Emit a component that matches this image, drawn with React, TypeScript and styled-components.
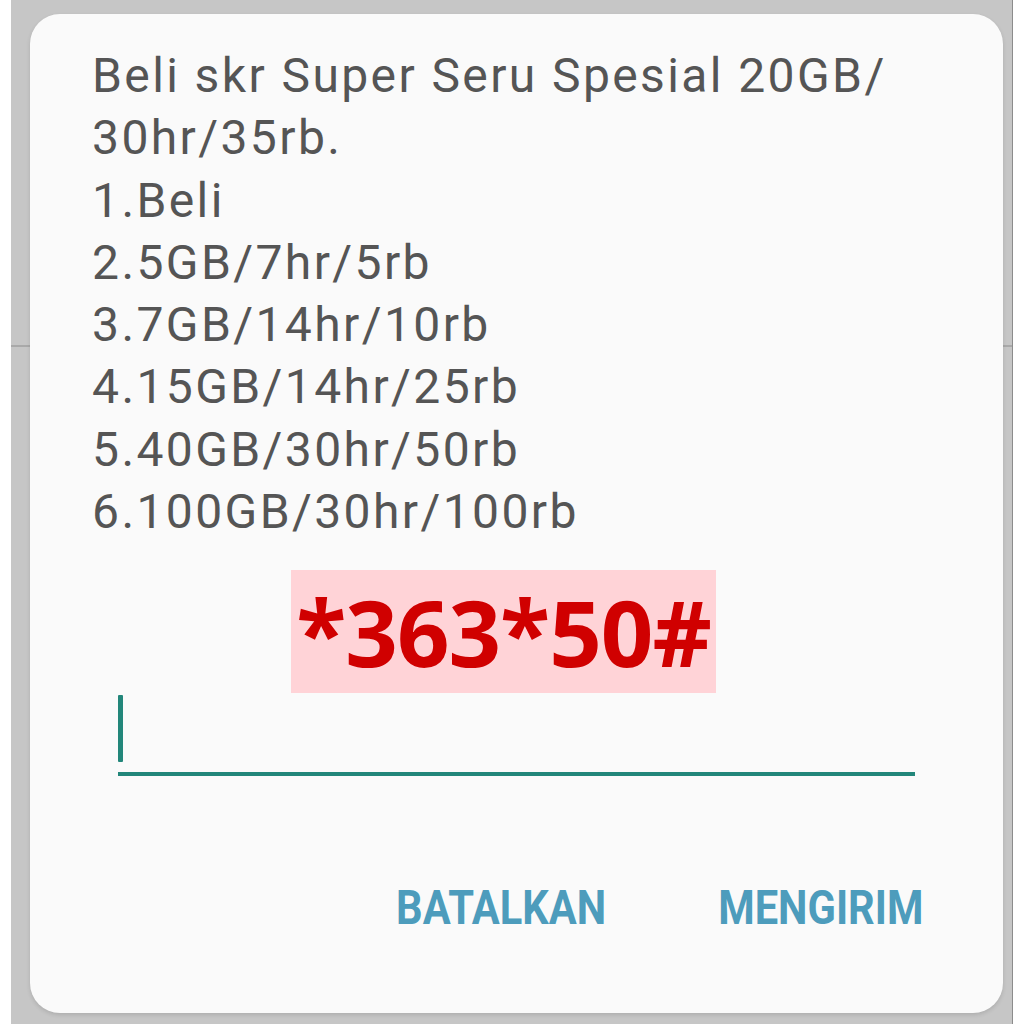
import React from 'react';
import styled, { createGlobalStyle } from 'styled-components';

const GlobalStyle = createGlobalStyle`
  html, body {
    margin: 0;
    padding: 0;
    background: #ffffff;
  }
  * {
    box-sizing: border-box;
  }
`;

const Page = styled.div`
  width: 1024px;
  height: 1024px;
  padding: 0 11px 0 11px;
  background: #ffffff;
`;

const Backdrop = styled.div`
  position: relative;
  height: 100%;
  background: #c6c6c6;
  border-right: 1px solid #8c8c8c;
  padding: 14px 9px 11px 19px;

  &::before {
    content: '';
    position: absolute;
    left: 0;
    right: 0;
    top: 345px;
    height: 2px;
    background: #a9a9a9;
  }
`;

const Dialog = styled.div`
  position: relative;
  height: 100%;
  background: #fafafa;
  border-radius: 30px;
  box-shadow: 0 2px 4px rgba(0, 0, 0, 0.12);
  padding: 31px 60px 0 62px;
  display: flex;
  flex-direction: column;
`;

const Message = styled.div`
  font-family: Roboto, 'Liberation Sans', sans-serif;
  font-size: 48px;
  line-height: 62.3px;
  letter-spacing: 2.4px;
  color: #555555;
  white-space: nowrap;
`;

const CodeRow = styled.div`
  display: flex;
  justify-content: center;
  padding-right: 28px;
  margin-top: 27px;
`;

const Code = styled.div`
  background: #ffd3d7;
  color: #d00000;
  font-family: 'Open Sans', 'Noto Sans', sans-serif;
  font-weight: 700;
  font-size: 92px;
  line-height: 123px;
  padding: 0 5px;
  letter-spacing: -1px;
`;

const Field = styled.div`
  margin: 2px 28px 0 26px;
  height: 81px;
  border-bottom: 4px solid #22867a;
  display: flex;
  align-items: flex-start;
`;

const Caret = styled.div`
  width: 5px;
  height: 67px;
  background: #22867a;
  border-radius: 1px;
`;

const Actions = styled.div`
  display: flex;
  justify-content: flex-end;
  gap: 75px;
  margin-top: 104px;
  padding-right: 20px;
`;

const ActionButton = styled.button`
  border: none;
  background: none;
  padding: 0;
  font-family: Roboto, 'Liberation Sans', sans-serif;
  font-weight: 700;
  font-size: 49px;
  line-height: 56px;
  color: #4d9cbc;
  transform: scaleX(0.85);
  transform-origin: right center;
  cursor: pointer;
`;

const lines = [
  'Beli skr Super Seru Spesial 20GB/',
  '30hr/35rb.',
  '1.Beli',
  '2.5GB/7hr/5rb',
  '3.7GB/14hr/10rb',
  '4.15GB/14hr/25rb',
  '5.40GB/30hr/50rb',
  '6.100GB/30hr/100rb',
];

export default function App() {
  return (
    <>
      <GlobalStyle />
      <Page>
        <Backdrop>
          <Dialog>
            <Message>
              {lines.map((line) => (
                <div key={line}>{line}</div>
              ))}
            </Message>
            <CodeRow>
              <Code>*363*50#</Code>
            </CodeRow>
            <Field>
              <Caret />
            </Field>
            <Actions>
              <ActionButton>BATALKAN</ActionButton>
              <ActionButton>MENGIRIM</ActionButton>
            </Actions>
          </Dialog>
        </Backdrop>
      </Page>
    </>
  );
}
